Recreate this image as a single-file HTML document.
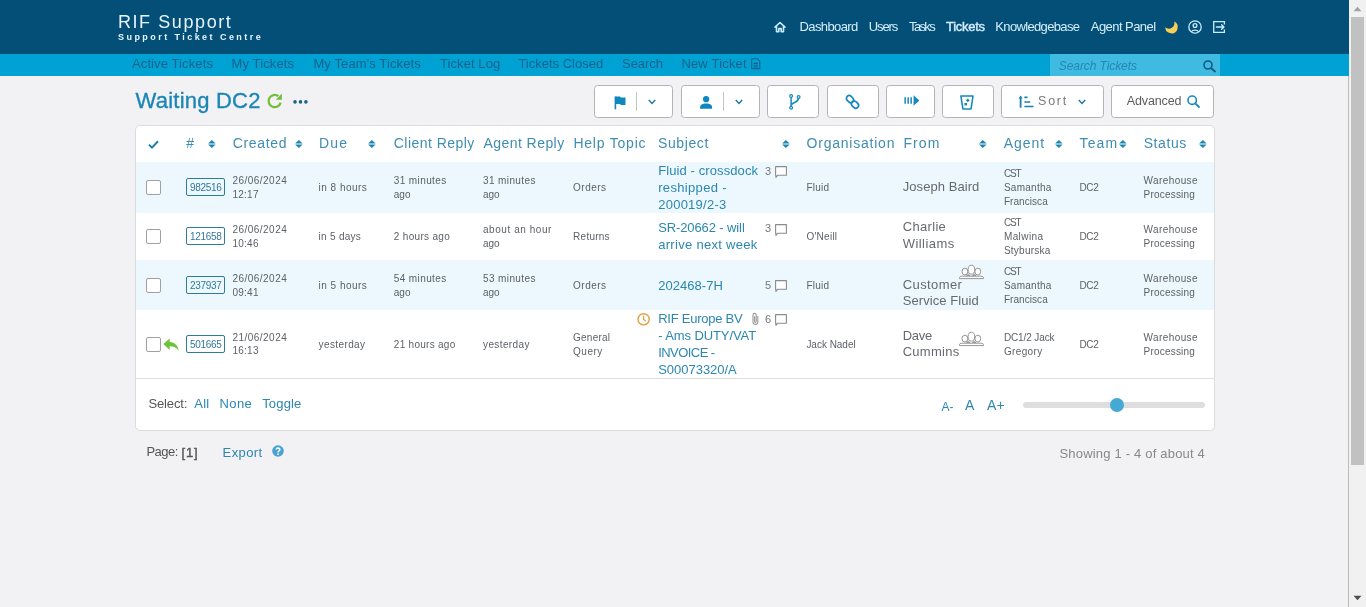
<!DOCTYPE html>
<html><head><meta charset="utf-8"><title>Waiting DC2</title>
<style>
html,body{margin:0;padding:0;width:1366px;height:607px;overflow:hidden;background:#f2f2f4;font-family:"Liberation Sans",sans-serif;}
.t{position:absolute;white-space:pre;line-height:1;}
.a{position:absolute;}
#hdr{left:0;top:0;width:1349px;height:54px;background:#034f78;}
#sub{left:0;top:54px;width:1349px;height:22px;background:#00a2d4;}
#sbox{left:1050px;top:54px;width:170px;height:22px;background:#3fbae1;}
.btn{position:absolute;top:85px;height:31px;background:#fff;border:1px solid #b4b4b4;border-radius:3.5px;}
.div{position:absolute;width:1px;background:#c4c4c4;}
#card{left:135px;top:125px;width:1078px;height:304px;background:#fff;border:1px solid #dcdcdc;border-radius:5px;overflow:hidden;}
.row{position:absolute;left:0;width:1078px;}
.alt{background:#ecf8fd;}
.cb{position:absolute;width:13px;height:13px;border:1px solid #a0a0a0;border-radius:2px;background:#fff;}
.tk{position:absolute;width:37px;height:16px;border:1px solid #2d7c9c;border-radius:2px;}
svg{position:absolute;overflow:visible;}
#sb{left:1349px;top:0;width:17px;height:607px;background:#f1f1f1;}
#sbl{left:1348px;top:76px;width:1px;height:531px;background:#bdbdbd;}
#thumb{left:1351px;top:17px;width:13px;height:448px;background:#c1c1c1;}
</style></head><body>
<div class="a" id="hdr"></div>
<div class="a" id="sub"></div>
<div class="a" id="sbox"></div>

<!-- header icons -->
<svg style="left:774px;top:21px" width="12" height="12" viewBox="0 0 12 12"><path d="M1 6.2 L6 1.5 L11 6.2 M2.5 5 V10.8 H4.8 V7.6 H7.2 V10.8 H9.5 V5" fill="none" stroke="#c9ecfa" stroke-width="1.6" stroke-linejoin="round" stroke-linecap="round"/></svg>
<svg style="left:1164.5px;top:21px" width="13" height="13" viewBox="0 0 13 13"><path d="M9.16 0.6 A6.2 6.2 0 1 1 0.3 6.36 A5.5 5.5 0 0 0 9.16 0.6 Z" fill="#f8cf55"/></svg>
<svg style="left:1188px;top:20px" width="14" height="14" viewBox="0 0 14 14"><circle cx="7" cy="7" r="6.2" fill="none" stroke="#c9ecfa" stroke-width="1.3"/><circle cx="7" cy="5.5" r="1.9" fill="none" stroke="#c9ecfa" stroke-width="1.3"/><path d="M3.4 11.8 C4.6 9.6 9.4 9.6 10.6 11.8" fill="none" stroke="#c9ecfa" stroke-width="1.3"/></svg>
<svg style="left:1213px;top:21px" width="13" height="12" viewBox="0 0 13 12"><path d="M11.4 3.6 V0.7 H0.7 V11.3 H11.4 V8.4" fill="none" stroke="#c9ecfa" stroke-width="1.3"/><path d="M3.4 6 H11 M8.6 3.7 L11 6 L8.6 8.3" fill="none" stroke="#c9ecfa" stroke-width="1.3" stroke-linecap="round" stroke-linejoin="round"/></svg>
<!-- new ticket doc icon -->
<svg style="left:750.5px;top:57.7px" width="10" height="12" viewBox="0 0 10 12"><path d="M0.7 0.7 H6.2 L8.8 3.3 V10.6 H0.7 Z M2.6 5.4 H6.9 M2.6 7.2 H6.9 M2.6 9 H6.9" fill="none" stroke="#176189" stroke-width="1.1"/></svg>
<!-- search icon -->
<svg style="left:1203px;top:59.5px" width="13" height="12" viewBox="0 0 13 12"><circle cx="5" cy="5" r="4" fill="none" stroke="#0f5a80" stroke-width="1.6"/><path d="M8 8 L12 11.5" stroke="#0f5a80" stroke-width="1.8" stroke-linecap="round"/></svg>

<!-- title icons -->
<svg style="left:267px;top:93px" width="16" height="16" viewBox="0 0 16 16"><path d="M11.4 3.2 A6.1 6.1 0 1 0 13.6 9.6" fill="none" stroke="#72bf3a" stroke-width="2.3"/><path d="M8.9 6.8 H14.9 V0.5 Z" fill="#72bf3a"/></svg>
<svg style="left:293px;top:99.5px" width="15" height="4" viewBox="0 0 15 4"><circle cx="2" cy="1.9" r="1.8" fill="#1d6384"/><circle cx="7.5" cy="1.9" r="1.8" fill="#1d6384"/><circle cx="12.9" cy="1.9" r="1.8" fill="#1d6384"/></svg>

<!-- buttons -->
<div class="btn" style="left:594px;width:77px"></div>
<div class="div" style="left:636px;top:92px;height:19px"></div>
<div class="btn" style="left:681px;width:77px"></div>
<div class="div" style="left:723px;top:92px;height:19px"></div>
<div class="btn" style="left:767px;width:50px"></div>
<div class="btn" style="left:827px;width:50px"></div>
<div class="btn" style="left:886px;width:47px"></div>
<div class="btn" style="left:942px;width:50px"></div>
<div class="btn" style="left:1001px;width:101px"></div>
<div class="btn" style="left:1111px;width:101px"></div>
<!-- flag -->
<svg style="left:613.5px;top:95.5px" width="12" height="14" viewBox="0 0 12 14"><path d="M0.6 0.5 H2.2 V13.3 H0.6 Z" fill="#0e87bf"/><path d="M1.5 0.5 H6 L6.8 1.6 H11.5 V9 H6.8 L6 8 H1.5 Z" fill="#0e87bf"/></svg>
<svg style="left:647.5px;top:98.5px" width="8" height="6" viewBox="0 0 8 6"><path d="M0.8 1 L4 4.4 L7.2 1" fill="none" stroke="#1f7a9c" stroke-width="1.5"/></svg>
<!-- person -->
<svg style="left:699.5px;top:95.5px" width="13" height="13" viewBox="0 0 13 13"><circle cx="6.1" cy="3.2" r="3.1" fill="#0e87bf"/><path d="M0.1 12.7 V11.6 C0.1 8.6 2.6 7.6 6.1 7.6 C9.6 7.6 12.1 8.6 12.1 11.6 V12.7 Z" fill="#0e87bf"/></svg>
<svg style="left:734.5px;top:98.5px" width="8" height="6" viewBox="0 0 8 6"><path d="M0.8 1 L4 4.4 L7.2 1" fill="none" stroke="#1f7a9c" stroke-width="1.5"/></svg>
<!-- fork -->
<svg style="left:788.5px;top:93.5px" width="12" height="16" viewBox="0 0 12 16"><circle cx="2.1" cy="2" r="1.4" fill="none" stroke="#1589bd" stroke-width="1.2"/><circle cx="9.6" cy="3" r="1.4" fill="none" stroke="#1589bd" stroke-width="1.2"/><circle cx="2.1" cy="13.8" r="1.4" fill="none" stroke="#1589bd" stroke-width="1.2"/><path d="M2.1 3.4 V12.4 M2.1 11.2 C3 8.2 9.4 8.5 9.6 4.4" fill="none" stroke="#1589bd" stroke-width="1.5"/></svg>
<!-- link -->
<svg style="left:845px;top:94px" width="16" height="16" viewBox="0 0 16 16"><rect x="1.1" y="2.4" width="7.8" height="5.6" rx="2.8" transform="rotate(45 5 5.2)" fill="none" stroke="#1589bd" stroke-width="1.7"/><rect x="6.1" y="7.8" width="7.8" height="5.6" rx="2.8" transform="rotate(45 10 10.6)" fill="none" stroke="#1589bd" stroke-width="1.7"/></svg>
<!-- arrow -->
<svg style="left:903.5px;top:95px" width="16" height="11" viewBox="0 0 16 11"><path d="M0.4 2.2 H1.9 V8.8 H0.4 Z M3.4 2.2 H4.9 V8.8 H3.4 Z M6.4 2.2 H7.9 V8.8 H6.4 Z M9.6 0.2 L15.4 5.5 L9.6 10.8 Z" fill="#1589bd"/></svg>
<!-- trash -->
<svg style="left:960px;top:94.5px" width="14" height="15" viewBox="0 0 14 15"><path d="M0.9 1 H13 L11 14 H2.9 Z" fill="none" stroke="#1589bd" stroke-width="1.6" stroke-linejoin="round"/><path d="M7.8 3.4 L9.7 5.3 L7.8 7.2 L5.9 5.3 Z" fill="#1589bd"/><rect x="4.4" y="8" width="2.6" height="2.4" fill="#1589bd"/></svg>
<!-- sort -->
<svg style="left:1018px;top:95px" width="16" height="13" viewBox="0 0 16 13"><path d="M2.6 12.7 V2.2" stroke="#1a80ac" stroke-width="1.8"/><path d="M0.6 3.6 L2.6 0.6 L4.6 3.6 Z" fill="#1a80ac"/><path d="M6.4 2.4 H9.5 M6.4 7 H12.2 M6.4 11.5 H15.5" stroke="#1a80ac" stroke-width="1.6"/></svg>
<svg style="left:1077.5px;top:98.5px" width="8" height="6" viewBox="0 0 8 6"><path d="M0.8 1 L4 4.4 L7.2 1" fill="none" stroke="#1f7a9c" stroke-width="1.5"/></svg>
<!-- advanced search -->
<svg style="left:1187px;top:95px" width="13" height="13" viewBox="0 0 13 13"><circle cx="5.2" cy="5.2" r="4.2" fill="none" stroke="#1589bd" stroke-width="1.6"/><path d="M8.3 8.3 L12 12" stroke="#1589bd" stroke-width="1.8" stroke-linecap="round"/></svg>

<!-- card -->
<div class="a" id="card">
  <div class="row alt" style="top:36px;height:51px"></div>
  <div class="row alt" style="top:134px;height:50px"></div>
  <div class="row" style="top:252px;height:1px;background:#dedede"></div>
</div>
<!-- header check -->
<svg style="left:148px;top:139.5px" width="11" height="9" viewBox="0 0 11 9"><path d="M1 4.6 L4 7.6 L10 1.2" fill="none" stroke="#1b7fae" stroke-width="2"/></svg>
<svg style="left:207.8px;top:139.5px" width="8" height="8" viewBox="0 0 8 8"><path d="M0.1 3.5 L3.85 0.1 L7.6 3.5 Z M0.1 4.5 L3.85 7.9 L7.6 4.5 Z" fill="#1b87b0"/></svg><svg style="left:294.9px;top:139.5px" width="8" height="8" viewBox="0 0 8 8"><path d="M0.1 3.5 L3.85 0.1 L7.6 3.5 Z M0.1 4.5 L3.85 7.9 L7.6 4.5 Z" fill="#1b87b0"/></svg><svg style="left:368.4px;top:139.5px" width="8" height="8" viewBox="0 0 8 8"><path d="M0.1 3.5 L3.85 0.1 L7.6 3.5 Z M0.1 4.5 L3.85 7.9 L7.6 4.5 Z" fill="#1b87b0"/></svg><svg style="left:781.6px;top:139.5px" width="8" height="8" viewBox="0 0 8 8"><path d="M0.1 3.5 L3.85 0.1 L7.6 3.5 Z M0.1 4.5 L3.85 7.9 L7.6 4.5 Z" fill="#1b87b0"/></svg><svg style="left:978.7px;top:139.5px" width="8" height="8" viewBox="0 0 8 8"><path d="M0.1 3.5 L3.85 0.1 L7.6 3.5 Z M0.1 4.5 L3.85 7.9 L7.6 4.5 Z" fill="#1b87b0"/></svg><svg style="left:1054.8px;top:139.5px" width="8" height="8" viewBox="0 0 8 8"><path d="M0.1 3.5 L3.85 0.1 L7.6 3.5 Z M0.1 4.5 L3.85 7.9 L7.6 4.5 Z" fill="#1b87b0"/></svg><svg style="left:1118.6px;top:139.5px" width="8" height="8" viewBox="0 0 8 8"><path d="M0.1 3.5 L3.85 0.1 L7.6 3.5 Z M0.1 4.5 L3.85 7.9 L7.6 4.5 Z" fill="#1b87b0"/></svg><svg style="left:1198.7px;top:139.5px" width="8" height="8" viewBox="0 0 8 8"><path d="M0.1 3.5 L3.85 0.1 L7.6 3.5 Z M0.1 4.5 L3.85 7.9 L7.6 4.5 Z" fill="#1b87b0"/></svg>
<div class="cb" style="left:146px;top:180.1px"></div>
<div class="tk" style="left:186px;top:178.3px"></div>
<div class="cb" style="left:146px;top:229.2px"></div>
<div class="tk" style="left:186px;top:227.3px"></div>
<div class="cb" style="left:146px;top:278.2px"></div>
<div class="tk" style="left:186px;top:276.2px"></div>
<div class="cb" style="left:146px;top:337.0px"></div>
<div class="tk" style="left:186px;top:335.3px"></div>
<svg style="left:775px;top:166.2px" width="12" height="12" viewBox="0 0 12 12"><path d="M0.6 0.6 H11.4 V9.2 H2.8 L0.9 11.3 V9.2 H0.6 Z" fill="#fff" stroke="#8a8a8a" stroke-width="1.1" stroke-linejoin="round"/></svg>
<svg style="left:775px;top:223.5px" width="12" height="12" viewBox="0 0 12 12"><path d="M0.6 0.6 H11.4 V9.2 H2.8 L0.9 11.3 V9.2 H0.6 Z" fill="#fff" stroke="#8a8a8a" stroke-width="1.1" stroke-linejoin="round"/></svg>
<svg style="left:775px;top:280.3px" width="12" height="12" viewBox="0 0 12 12"><path d="M0.6 0.6 H11.4 V9.2 H2.8 L0.9 11.3 V9.2 H0.6 Z" fill="#fff" stroke="#8a8a8a" stroke-width="1.1" stroke-linejoin="round"/></svg>
<svg style="left:775px;top:314.1px" width="12" height="12" viewBox="0 0 12 12"><path d="M0.6 0.6 H11.4 V9.2 H2.8 L0.9 11.3 V9.2 H0.6 Z" fill="#fff" stroke="#8a8a8a" stroke-width="1.1" stroke-linejoin="round"/></svg>
<svg style="left:162.5px;top:337.5px" width="16" height="13" viewBox="0 0 16 13"><path d="M0.4 5.9 L6.6 0.6 V3.9 C11.2 4 14.6 6.6 15.7 12.7 C13.6 9.6 10.6 8.3 6.6 8.3 V11.9 Z" fill="#6cc23a"/></svg>
<svg style="left:637px;top:312.8px" width="14" height="13" viewBox="0 0 14 13"><circle cx="6.6" cy="6.3" r="5.6" fill="none" stroke="#e2a03f" stroke-width="1.4"/><path d="M6.6 2.8 V6.5 L8.8 8" fill="none" stroke="#e2a03f" stroke-width="1.3"/></svg>
<svg style="left:750.5px;top:312px" width="9" height="14" viewBox="0 0 9 14"><path d="M6.8 4 V10 A2.4 2.4 0 0 1 2 10 V3 A1.6 1.6 0 0 1 5.2 3 V9.6 A0.8 0.8 0 0 1 3.6 9.6 V4.2" fill="none" stroke="#999" stroke-width="1.1"/></svg>
<svg style="left:959px;top:264.9px" width="25" height="14" viewBox="0 0 25 14"><g fill="#fff" stroke="#8a8a8a" stroke-width="0.9"><path d="M0.5 13.6 V12.5 Q0.6 11.2 3.2 11.2 H21.8 Q24.4 11.2 24.5 12.5 V13.6 Z"/><path d="M7.7 10.6 Q9.3 7.8 10.9 10.6 Z M13.6 10.6 Q15.2 7.8 16.8 10.6 Z"/><ellipse cx="5.9" cy="6.6" rx="2.9" ry="3.4"/><ellipse cx="18.8" cy="6.6" rx="2.9" ry="3.4"/><ellipse cx="12.4" cy="4.7" rx="3.3" ry="4.5"/></g></svg>
<svg style="left:959px;top:332.0px" width="25" height="14" viewBox="0 0 25 14"><g fill="#fff" stroke="#8a8a8a" stroke-width="0.9"><path d="M0.5 13.6 V12.5 Q0.6 11.2 3.2 11.2 H21.8 Q24.4 11.2 24.5 12.5 V13.6 Z"/><path d="M7.7 10.6 Q9.3 7.8 10.9 10.6 Z M13.6 10.6 Q15.2 7.8 16.8 10.6 Z"/><ellipse cx="5.9" cy="6.6" rx="2.9" ry="3.4"/><ellipse cx="18.8" cy="6.6" rx="2.9" ry="3.4"/><ellipse cx="12.4" cy="4.7" rx="3.3" ry="4.5"/></g></svg>

<!-- slider -->
<div class="a" style="left:1023px;top:402px;width:182px;height:6px;border-radius:3px;background:#dedede"></div>
<div class="a" style="left:1110px;top:397.8px;width:14px;height:14px;border-radius:7px;background:#46a9d3"></div>
<!-- help -->
<svg style="left:272px;top:445px" width="12" height="12" viewBox="0 0 12 12"><circle cx="6" cy="6" r="5.8" fill="#4aa3cf"/><path d="M4.2 4.6 C4.2 2.4 7.9 2.4 7.9 4.5 C7.9 5.8 6 5.9 6 7.4" fill="none" stroke="#fff" stroke-width="1.4"/><circle cx="6" cy="9.2" r="0.85" fill="#fff"/></svg>

<!-- scrollbar -->
<div class="a" id="sbl"></div>
<div class="a" id="sb"></div>
<div class="a" id="thumb"></div>
<svg style="left:1353px;top:6px" width="9" height="6" viewBox="0 0 9 6"><path d="M0.5 5.2 L4.5 0.8 L8.5 5.2 Z" fill="#a3a3a3"/></svg>
<svg style="left:1353px;top:595px" width="9" height="6" viewBox="0 0 9 6"><path d="M0.5 0.8 L4.5 5.2 L8.5 0.8 Z" fill="#505050"/></svg>

<div style="position:absolute;left:0;top:0;width:1366px;height:607px;will-change:transform">
<div class="t" id="t0" style="left:117.9px;top:13.00px;font-size:18px;color:#e8f5fc;letter-spacing:1.59px;">RIF Support</div>
<div class="t" id="t1" style="left:118.0px;top:33.00px;font-size:9px;color:#e8f5fc;font-weight:700;letter-spacing:2.44px;">Support Ticket Centre</div>
<div class="t" id="t2" style="left:799.6px;top:20.00px;font-size:13px;color:#d5eef9;letter-spacing:-0.62px;">Dashboard</div>
<div class="t" id="t3" style="left:868.8px;top:20.00px;font-size:13px;color:#d5eef9;letter-spacing:-1.15px;">Users</div>
<div class="t" id="t4" style="left:909.0px;top:20.00px;font-size:13px;color:#d5eef9;letter-spacing:-1.62px;">Tasks</div>
<div class="t" id="t5" style="left:946.0px;top:20.00px;font-size:13px;color:#d5eef9;-webkit-text-stroke:0.4px currentColor;letter-spacing:-0.28px;">Tickets</div>
<div class="t" id="t6" style="left:995.3px;top:20.00px;font-size:13px;color:#d5eef9;letter-spacing:-0.65px;">Knowledgebase</div>
<div class="t" id="t7" style="left:1090.8px;top:20.00px;font-size:13px;color:#d5eef9;letter-spacing:-0.56px;">Agent Panel</div>
<div class="t" id="t8" style="left:132.0px;top:57.00px;font-size:13px;color:#176189;letter-spacing:0.11px;">Active Tickets</div>
<div class="t" id="t9" style="left:231.5px;top:57.00px;font-size:13px;color:#176189;letter-spacing:0.13px;">My Tickets</div>
<div class="t" id="t10" style="left:313.4px;top:57.00px;font-size:13px;color:#176189;letter-spacing:0.11px;">My Team&#x27;s Tickets</div>
<div class="t" id="t11" style="left:440.0px;top:57.00px;font-size:13px;color:#176189;letter-spacing:0.08px;">Ticket Log</div>
<div class="t" id="t12" style="left:518.4px;top:57.00px;font-size:13px;color:#176189;">Tickets Closed</div>
<div class="t" id="t13" style="left:622.0px;top:57.00px;font-size:13px;color:#176189;letter-spacing:-0.03px;">Search</div>
<div class="t" id="t14" style="left:681.4px;top:57.00px;font-size:13px;color:#176189;letter-spacing:0.18px;">New Ticket</div>
<div class="t" id="t15" style="left:1058.8px;top:60.00px;font-size:12px;color:#2587b0;font-style:italic;letter-spacing:-0.09px;">Search Tickets</div>
<div class="t" id="t16" style="left:135.6px;top:90.00px;font-size:22px;color:#1b86b6;letter-spacing:0.22px;-webkit-text-stroke:0.35px #1b86b6;">Waiting DC2</div>
<div class="t" id="t17" style="left:1038.0px;top:95.00px;font-size:12.5px;color:#7a7a7a;letter-spacing:1.79px;">Sort</div>
<div class="t" id="t18" style="left:1126.8px;top:95.00px;font-size:12.5px;color:#5c5c5c;letter-spacing:-0.14px;">Advanced</div>
<div class="t" id="t19" style="left:186.3px;top:136.00px;font-size:14px;color:#3f8db3;">#</div>
<div class="t" id="t20" style="left:232.7px;top:136.00px;font-size:14px;color:#3f8db3;letter-spacing:0.67px;">Created</div>
<div class="t" id="t21" style="left:319.0px;top:136.00px;font-size:14px;color:#3f8db3;letter-spacing:1.17px;">Due</div>
<div class="t" id="t22" style="left:393.8px;top:136.00px;font-size:14px;color:#3f8db3;letter-spacing:0.46px;">Client Reply</div>
<div class="t" id="t23" style="left:483.5px;top:136.00px;font-size:14px;color:#3f8db3;letter-spacing:0.44px;">Agent Reply</div>
<div class="t" id="t24" style="left:573.4px;top:136.00px;font-size:14px;color:#3f8db3;letter-spacing:0.78px;">Help Topic</div>
<div class="t" id="t25" style="left:658.0px;top:136.00px;font-size:14px;color:#3f8db3;letter-spacing:0.60px;">Subject</div>
<div class="t" id="t26" style="left:806.6px;top:136.00px;font-size:14px;color:#3f8db3;letter-spacing:0.77px;">Organisation</div>
<div class="t" id="t27" style="left:903.5px;top:136.00px;font-size:14px;color:#3f8db3;letter-spacing:1.05px;">From</div>
<div class="t" id="t28" style="left:1003.8px;top:136.00px;font-size:14px;color:#3f8db3;letter-spacing:0.91px;">Agent</div>
<div class="t" id="t29" style="left:1079.5px;top:136.00px;font-size:14px;color:#3f8db3;letter-spacing:1.13px;">Team</div>
<div class="t" id="t30" style="left:1143.7px;top:136.00px;font-size:14px;color:#3f8db3;letter-spacing:0.58px;">Status</div>
<div class="t" id="t31" style="left:190.0px;top:183.00px;font-size:10px;color:#33789a;letter-spacing:-0.32px;">982516</div>
<div class="t" id="t32" style="left:232.4px;top:176.00px;font-size:10px;color:#5d6166;letter-spacing:0.48px;">26/06/2024</div>
<div class="t" id="t33" style="left:232.4px;top:190.00px;font-size:10px;color:#5d6166;letter-spacing:0.27px;">12:17</div>
<div class="t" id="t34" style="left:318.6px;top:183.00px;font-size:10px;color:#5d6166;letter-spacing:0.48px;">in 8 hours</div>
<div class="t" id="t35" style="left:393.8px;top:176.00px;font-size:10px;color:#5d6166;letter-spacing:0.39px;">31 minutes</div>
<div class="t" id="t36" style="left:393.8px;top:190.00px;font-size:10px;color:#5d6166;">ago</div>
<div class="t" id="t37" style="left:483.0px;top:176.00px;font-size:10px;color:#5d6166;letter-spacing:0.39px;">31 minutes</div>
<div class="t" id="t38" style="left:483.0px;top:190.00px;font-size:10px;color:#5d6166;">ago</div>
<div class="t" id="t39" style="left:573.1px;top:183.00px;font-size:10px;color:#5d6166;letter-spacing:0.47px;">Orders</div>
<div class="t" id="t40" style="left:658.2px;top:164.00px;font-size:13px;color:#2b87b1;letter-spacing:0.10px;">Fluid - crossdock</div>
<div class="t" id="t41" style="left:658.2px;top:181.00px;font-size:13px;color:#2b87b1;letter-spacing:0.33px;">reshipped -</div>
<div class="t" id="t42" style="left:658.2px;top:198.00px;font-size:13px;color:#2b87b1;letter-spacing:0.25px;">200019/2-3</div>
<div class="t" id="t43" style="left:764.9px;top:166.00px;font-size:11px;color:#777;">3</div>
<div class="t" id="t44" style="left:806.4px;top:183.00px;font-size:10px;color:#5d6166;letter-spacing:0.28px;">Fluid</div>
<div class="t" id="t45" style="left:902.7px;top:180.00px;font-size:13px;color:#666a70;letter-spacing:0.07px;">Joseph Baird</div>
<div class="t" id="t46" style="left:1003.9px;top:169.00px;font-size:10px;color:#5d6166;letter-spacing:-1.10px;">CST</div>
<div class="t" id="t47" style="left:1003.9px;top:183.00px;font-size:10px;color:#5d6166;letter-spacing:0.27px;">Samantha</div>
<div class="t" id="t48" style="left:1003.9px;top:197.00px;font-size:10px;color:#5d6166;letter-spacing:0.06px;">Francisca</div>
<div class="t" id="t49" style="left:1079.5px;top:183.00px;font-size:10px;color:#5d6166;letter-spacing:-0.36px;">DC2</div>
<div class="t" id="t50" style="left:1143.6px;top:176.00px;font-size:10px;color:#5d6166;letter-spacing:0.40px;">Warehouse</div>
<div class="t" id="t51" style="left:1143.6px;top:190.00px;font-size:10px;color:#5d6166;letter-spacing:0.20px;">Processing</div>
<div class="t" id="t52" style="left:190.0px;top:232.00px;font-size:10px;color:#33789a;letter-spacing:-0.32px;">121658</div>
<div class="t" id="t53" style="left:232.4px;top:225.00px;font-size:10px;color:#5d6166;letter-spacing:0.48px;">26/06/2024</div>
<div class="t" id="t54" style="left:232.4px;top:239.00px;font-size:10px;color:#5d6166;letter-spacing:0.27px;">10:46</div>
<div class="t" id="t55" style="left:318.6px;top:232.00px;font-size:10px;color:#5d6166;letter-spacing:0.28px;">in 5 days</div>
<div class="t" id="t56" style="left:393.8px;top:232.00px;font-size:10px;color:#5d6166;letter-spacing:0.32px;">2 hours ago</div>
<div class="t" id="t57" style="left:483.0px;top:225.00px;font-size:10px;color:#5d6166;letter-spacing:0.56px;">about an hour</div>
<div class="t" id="t58" style="left:483.0px;top:239.00px;font-size:10px;color:#5d6166;">ago</div>
<div class="t" id="t59" style="left:573.1px;top:232.00px;font-size:10px;color:#5d6166;letter-spacing:0.25px;">Returns</div>
<div class="t" id="t60" style="left:658.2px;top:221.00px;font-size:13px;color:#2b87b1;letter-spacing:-0.11px;">SR-20662 - will</div>
<div class="t" id="t61" style="left:658.2px;top:238.00px;font-size:13px;color:#2b87b1;letter-spacing:0.30px;">arrive next week</div>
<div class="t" id="t62" style="left:764.9px;top:223.00px;font-size:11px;color:#777;">3</div>
<div class="t" id="t63" style="left:806.4px;top:232.00px;font-size:10px;color:#5d6166;letter-spacing:0.26px;">O&#x27;Neill</div>
<div class="t" id="t64" style="left:902.7px;top:220.00px;font-size:13px;color:#666a70;letter-spacing:0.33px;">Charlie</div>
<div class="t" id="t65" style="left:902.7px;top:237.00px;font-size:13px;color:#666a70;letter-spacing:0.45px;">Williams</div>
<div class="t" id="t66" style="left:1003.9px;top:218.00px;font-size:10px;color:#5d6166;letter-spacing:-1.10px;">CST</div>
<div class="t" id="t67" style="left:1003.9px;top:232.00px;font-size:10px;color:#5d6166;letter-spacing:0.42px;">Malwina</div>
<div class="t" id="t68" style="left:1003.9px;top:246.00px;font-size:10px;color:#5d6166;letter-spacing:0.25px;">Styburska</div>
<div class="t" id="t69" style="left:1079.5px;top:232.00px;font-size:10px;color:#5d6166;letter-spacing:-0.36px;">DC2</div>
<div class="t" id="t70" style="left:1143.6px;top:225.00px;font-size:10px;color:#5d6166;letter-spacing:0.40px;">Warehouse</div>
<div class="t" id="t71" style="left:1143.6px;top:239.00px;font-size:10px;color:#5d6166;letter-spacing:0.20px;">Processing</div>
<div class="t" id="t72" style="left:190.0px;top:281.00px;font-size:10px;color:#33789a;letter-spacing:-0.32px;">237937</div>
<div class="t" id="t73" style="left:232.4px;top:274.00px;font-size:10px;color:#5d6166;letter-spacing:0.48px;">26/06/2024</div>
<div class="t" id="t74" style="left:232.4px;top:288.00px;font-size:10px;color:#5d6166;letter-spacing:0.27px;">09:41</div>
<div class="t" id="t75" style="left:318.6px;top:281.00px;font-size:10px;color:#5d6166;letter-spacing:0.48px;">in 5 hours</div>
<div class="t" id="t76" style="left:393.8px;top:274.00px;font-size:10px;color:#5d6166;letter-spacing:0.39px;">54 minutes</div>
<div class="t" id="t77" style="left:393.8px;top:288.00px;font-size:10px;color:#5d6166;">ago</div>
<div class="t" id="t78" style="left:483.0px;top:274.00px;font-size:10px;color:#5d6166;letter-spacing:0.39px;">53 minutes</div>
<div class="t" id="t79" style="left:483.0px;top:288.00px;font-size:10px;color:#5d6166;">ago</div>
<div class="t" id="t80" style="left:573.1px;top:281.00px;font-size:10px;color:#5d6166;letter-spacing:0.47px;">Orders</div>
<div class="t" id="t81" style="left:658.2px;top:279.00px;font-size:13px;color:#2b87b1;letter-spacing:0.05px;">202468-7H</div>
<div class="t" id="t82" style="left:764.9px;top:280.00px;font-size:11px;color:#777;">5</div>
<div class="t" id="t83" style="left:806.4px;top:281.00px;font-size:10px;color:#5d6166;letter-spacing:0.28px;">Fluid</div>
<div class="t" id="t84" style="left:902.7px;top:278.00px;font-size:13px;color:#666a70;letter-spacing:0.41px;">Customer</div>
<div class="t" id="t85" style="left:902.7px;top:294.00px;font-size:13px;color:#666a70;letter-spacing:0.07px;">Service Fluid</div>
<div class="t" id="t86" style="left:1003.9px;top:267.00px;font-size:10px;color:#5d6166;letter-spacing:-1.10px;">CST</div>
<div class="t" id="t87" style="left:1003.9px;top:281.00px;font-size:10px;color:#5d6166;letter-spacing:0.27px;">Samantha</div>
<div class="t" id="t88" style="left:1003.9px;top:295.00px;font-size:10px;color:#5d6166;letter-spacing:0.06px;">Francisca</div>
<div class="t" id="t89" style="left:1079.5px;top:281.00px;font-size:10px;color:#5d6166;letter-spacing:-0.36px;">DC2</div>
<div class="t" id="t90" style="left:1143.6px;top:274.00px;font-size:10px;color:#5d6166;letter-spacing:0.40px;">Warehouse</div>
<div class="t" id="t91" style="left:1143.6px;top:288.00px;font-size:10px;color:#5d6166;letter-spacing:0.20px;">Processing</div>
<div class="t" id="t92" style="left:190.0px;top:340.00px;font-size:10px;color:#33789a;letter-spacing:-0.32px;">501665</div>
<div class="t" id="t93" style="left:232.4px;top:333.00px;font-size:10px;color:#5d6166;letter-spacing:0.48px;">21/06/2024</div>
<div class="t" id="t94" style="left:232.4px;top:346.00px;font-size:10px;color:#5d6166;letter-spacing:0.27px;">16:13</div>
<div class="t" id="t95" style="left:318.6px;top:340.00px;font-size:10px;color:#5d6166;letter-spacing:0.39px;">yesterday</div>
<div class="t" id="t96" style="left:393.8px;top:340.00px;font-size:10px;color:#5d6166;letter-spacing:0.28px;">21 hours ago</div>
<div class="t" id="t97" style="left:483.0px;top:340.00px;font-size:10px;color:#5d6166;letter-spacing:0.39px;">yesterday</div>
<div class="t" id="t98" style="left:573.1px;top:333.00px;font-size:10px;color:#5d6166;letter-spacing:0.22px;">General</div>
<div class="t" id="t99" style="left:573.1px;top:347.00px;font-size:10px;color:#5d6166;letter-spacing:0.49px;">Query</div>
<div class="t" id="t100" style="left:658.2px;top:312.00px;font-size:13px;color:#2b87b1;letter-spacing:-0.25px;">RIF Europe BV</div>
<div class="t" id="t101" style="left:658.2px;top:329.00px;font-size:13px;color:#2b87b1;letter-spacing:-0.10px;">- Ams DUTY/VAT</div>
<div class="t" id="t102" style="left:658.2px;top:346.00px;font-size:13px;color:#2b87b1;letter-spacing:-0.55px;">INVOICE -</div>
<div class="t" id="t103" style="left:658.2px;top:363.00px;font-size:13px;color:#2b87b1;letter-spacing:-0.02px;">S00073320/A</div>
<div class="t" id="t104" style="left:764.9px;top:314.00px;font-size:11px;color:#777;">6</div>
<div class="t" id="t105" style="left:806.4px;top:340.00px;font-size:10px;color:#5d6166;letter-spacing:-0.02px;">Jack Nadel</div>
<div class="t" id="t106" style="left:902.7px;top:329.00px;font-size:13px;color:#666a70;letter-spacing:-0.24px;">Dave</div>
<div class="t" id="t107" style="left:902.7px;top:345.00px;font-size:13px;color:#666a70;letter-spacing:0.27px;">Cummins</div>
<div class="t" id="t108" style="left:1003.9px;top:333.00px;font-size:10px;color:#5d6166;letter-spacing:-0.11px;">DC1/2 Jack</div>
<div class="t" id="t109" style="left:1003.9px;top:347.00px;font-size:10px;color:#5d6166;letter-spacing:0.36px;">Gregory</div>
<div class="t" id="t110" style="left:1079.5px;top:340.00px;font-size:10px;color:#5d6166;letter-spacing:-0.36px;">DC2</div>
<div class="t" id="t111" style="left:1143.6px;top:333.00px;font-size:10px;color:#5d6166;letter-spacing:0.40px;">Warehouse</div>
<div class="t" id="t112" style="left:1143.6px;top:347.00px;font-size:10px;color:#5d6166;letter-spacing:0.20px;">Processing</div>
<div class="t" id="t113" style="left:148.5px;top:397.00px;font-size:13px;color:#555;letter-spacing:-0.15px;">Select:</div>
<div class="t" id="t114" style="left:194.2px;top:397.00px;font-size:13px;color:#2b87b1;letter-spacing:0.29px;">All</div>
<div class="t" id="t115" style="left:219.5px;top:397.00px;font-size:13px;color:#2b87b1;letter-spacing:0.42px;">None</div>
<div class="t" id="t116" style="left:262.2px;top:397.00px;font-size:13px;color:#2b87b1;letter-spacing:0.17px;">Toggle</div>
<div class="t" id="t117" style="left:941.5px;top:401.00px;font-size:12px;color:#2b87b1;letter-spacing:-0.04px;">A-</div>
<div class="t" id="t118" style="left:965.0px;top:398.00px;font-size:14px;color:#2b87b1;">A</div>
<div class="t" id="t119" style="left:987.0px;top:398.00px;font-size:14px;color:#2b87b1;letter-spacing:0.10px;">A+</div>
<div class="t" id="t120" style="left:146.4px;top:445.00px;font-size:13px;color:#555;letter-spacing:-0.51px;">Page:</div>
<div class="t" id="t121" style="left:181.6px;top:446.00px;font-size:13px;color:#555;-webkit-text-stroke:0.4px currentColor;letter-spacing:0.74px;">[1]</div>
<div class="t" id="t122" style="left:222.6px;top:446.00px;font-size:13px;color:#2b87b1;letter-spacing:0.39px;">Export</div>
<div class="t" id="t123" style="left:1059.5px;top:447.00px;font-size:13px;color:#888;letter-spacing:0.19px;">Showing 1 - 4 of about 4</div>
</div>
</body></html>
